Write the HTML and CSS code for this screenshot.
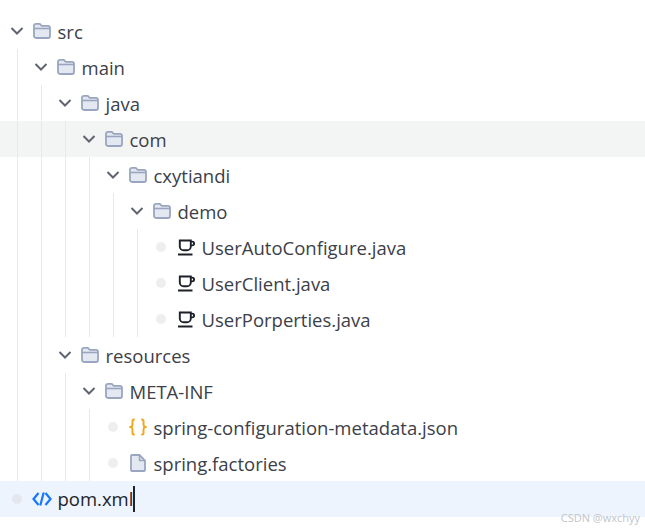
FILE: index.html
```html
<!DOCTYPE html>
<html lang="en">
<head>
<meta charset="utf-8">
<title>Project tree</title>
<link rel="stylesheet" href="styles.css">
</head>
<body>
<svg class="defs" aria-hidden="true">
  <symbol id="chev" viewBox="0 0 16 16"><path d="M2.500 5l5.500 5.500L13.500 5" fill="none" stroke="#5f6672" stroke-width="2"/></symbol>
  <symbol id="folder" viewBox="0 0 18 18"><path d="M1 3.800C1 2.500 1.800 1.800 3 1.800h3.800l2 2H15c1.200 0 2 .8 2 2V14c0 1.200-.8 2-2 2H3c-1.200 0-2-.8-2-2z" fill="#e4e8f1" stroke="#9aa6c0" stroke-width="1.800"/><path d="M1 6.500h16" stroke="#9aa6c0" stroke-width="1.600"/></symbol>
  <symbol id="java" viewBox="0 0 18 18"><path d="M2.800 2.500h11v6a3.800 3.800 0 0 1-3.800 3.800H6.600a3.800 3.800 0 0 1-3.800-3.800zM13.800 3.600h1.400c1.200 0 1.900.8 1.900 1.900s-.7 1.900-1.900 1.900h-1.400M1 16.500h14.500" fill="none" stroke="#1d2129" stroke-width="1.900"/></symbol>
  <symbol id="json" viewBox="0 0 18 18"><path d="M5.800 1.500H5c-1 0-1.500.5-1.500 1.500v3.600c0 1.200-.6 2-1.800 2.400 1.200.4 1.800 1.200 1.800 2.400V15c0 1 .5 1.500 1.500 1.500h.8M12.200 1.500H13c1 0 1.500.5 1.500 1.500v3.600c0 1.200.6 2 1.800 2.400-1.200.4-1.800 1.200-1.800 2.400V15c0 1-.5 1.500-1.500 1.500h-.8" fill="none" stroke="#f0a81e" stroke-width="2"/></symbol>
  <symbol id="file" viewBox="0 0 18 18"><path d="M2 2c0-.6.4-1 1-1H10.500l5.500 5.500V16c0 .6-.4 1-1 1H3c-.6 0-1-.4-1-1z" fill="#e4e8f1" stroke="#9aa6c0" stroke-width="1.800"/><path d="M10.500 1v5.500H16" fill="none" stroke="#9aa6c0" stroke-width="1.500"/></symbol>
  <symbol id="xml" viewBox="0 0 20 18"><path d="M6.500 3L1.500 9l5 6M13.500 3l5 6-5 6M11.700 2.500L8.300 15.500" fill="none" stroke="#1677ff" stroke-width="2.200"/></symbol>
</svg>
<ul class="tree">
  <li class="row"><span class="twist"><svg class="chev"><use href="#chev"/></svg></span><svg class="icon"><use href="#folder"/></svg><span class="name">src</span></li>
  <li class="row"><i class="guide"></i><span class="twist"><svg class="chev"><use href="#chev"/></svg></span><svg class="icon"><use href="#folder"/></svg><span class="name">main</span></li>
  <li class="row"><i class="guide"></i><i class="guide"></i><span class="twist"><svg class="chev"><use href="#chev"/></svg></span><svg class="icon"><use href="#folder"/></svg><span class="name">java</span></li>
  <li class="row row-hover"><i class="guide"></i><i class="guide"></i><i class="guide"></i><span class="twist"><svg class="chev"><use href="#chev"/></svg></span><svg class="icon"><use href="#folder"/></svg><span class="name">com</span></li>
  <li class="row"><i class="guide"></i><i class="guide"></i><i class="guide"></i><i class="guide"></i><span class="twist"><svg class="chev"><use href="#chev"/></svg></span><svg class="icon"><use href="#folder"/></svg><span class="name">cxytiandi</span></li>
  <li class="row"><i class="guide"></i><i class="guide"></i><i class="guide"></i><i class="guide"></i><i class="guide"></i><span class="twist"><svg class="chev"><use href="#chev"/></svg></span><svg class="icon"><use href="#folder"/></svg><span class="name">demo</span></li>
  <li class="row"><i class="guide"></i><i class="guide"></i><i class="guide"></i><i class="guide"></i><i class="guide"></i><i class="guide"></i><span class="twist"><b class="dot"></b></span><svg class="icon"><use href="#java"/></svg><span class="name">UserAutoConfigure.java</span></li>
  <li class="row"><i class="guide"></i><i class="guide"></i><i class="guide"></i><i class="guide"></i><i class="guide"></i><i class="guide"></i><span class="twist"><b class="dot"></b></span><svg class="icon"><use href="#java"/></svg><span class="name">UserClient.java</span></li>
  <li class="row"><i class="guide"></i><i class="guide"></i><i class="guide"></i><i class="guide"></i><i class="guide"></i><i class="guide"></i><span class="twist"><b class="dot"></b></span><svg class="icon"><use href="#java"/></svg><span class="name">UserPorperties.java</span></li>
  <li class="row"><i class="guide"></i><i class="guide"></i><span class="twist"><svg class="chev"><use href="#chev"/></svg></span><svg class="icon"><use href="#folder"/></svg><span class="name">resources</span></li>
  <li class="row"><i class="guide"></i><i class="guide"></i><i class="guide"></i><span class="twist"><svg class="chev"><use href="#chev"/></svg></span><svg class="icon"><use href="#folder"/></svg><span class="name">META-INF</span></li>
  <li class="row"><i class="guide"></i><i class="guide"></i><i class="guide"></i><i class="guide"></i><span class="twist"><b class="dot"></b></span><svg class="icon"><use href="#json"/></svg><span class="name">spring-configuration-metadata.json</span></li>
  <li class="row"><i class="guide"></i><i class="guide"></i><i class="guide"></i><i class="guide"></i><span class="twist"><b class="dot"></b></span><svg class="icon"><use href="#file"/></svg><span class="name">spring.factories</span></li>
  <li class="row row-active"><span class="twist"><b class="dot"></b></span><svg class="icon icon-wide"><use href="#xml"/></svg><span class="name name-edit">pom.xml</span></li>
</ul>
<footer class="mark">CSDN @wxchyy</footer>
</body>
</html>
```
FILE: styles.css
```css
html, body {
  margin: 0;
  height: 100%;
  background: #fff;
  overflow: hidden;
}
body {
  position: relative;
  font-family: "Open Sans", sans-serif;
}
.defs {
  display: none;
}
.tree {
  list-style: none;
  margin: 0;
  padding: 13px 0 0;
}
.row {
  display: flex;
  align-items: center;
  height: 36px;
  padding-left: 5px;
  font-size: 18.500px;
  color: #3c4048;
}
.row-hover {
  background: #f3f5f5;
}
.row-active {
  background: #edf4fe;
  color: #1f2329;
}
.guide {
  box-sizing: border-box;
  align-self: stretch;
  width: 12px;
  margin-left: 12px;
  border-left: 1px solid #e8e9ec;
}
.twist {
  display: flex;
  align-items: center;
  justify-content: center;
  width: 24px;
  flex: none;
}
.chev {
  width: 16px;
  height: 16px;
}
.dot {
  width: 10px;
  height: 10px;
  border-radius: 50%;
  background: #eeeef0;
}
.row-active .dot {
  background: #e4e7ee;
}
.icon {
  width: 18px;
  height: 18px;
  margin: 0 6.500px 0 4px;
  flex: none;
}
.icon-wide {
  width: 20px;
  margin: 0 5.500px 0 3px;
}
.name {
  white-space: nowrap;
}
.name-edit {
  border-right: 2px solid #1f2329;
  line-height: 26px;
}
.mark {
  position: absolute;
  right: 5px;
  bottom: 4px;
  font-size: 11px;
  color: #c2c5ca;
}
```
